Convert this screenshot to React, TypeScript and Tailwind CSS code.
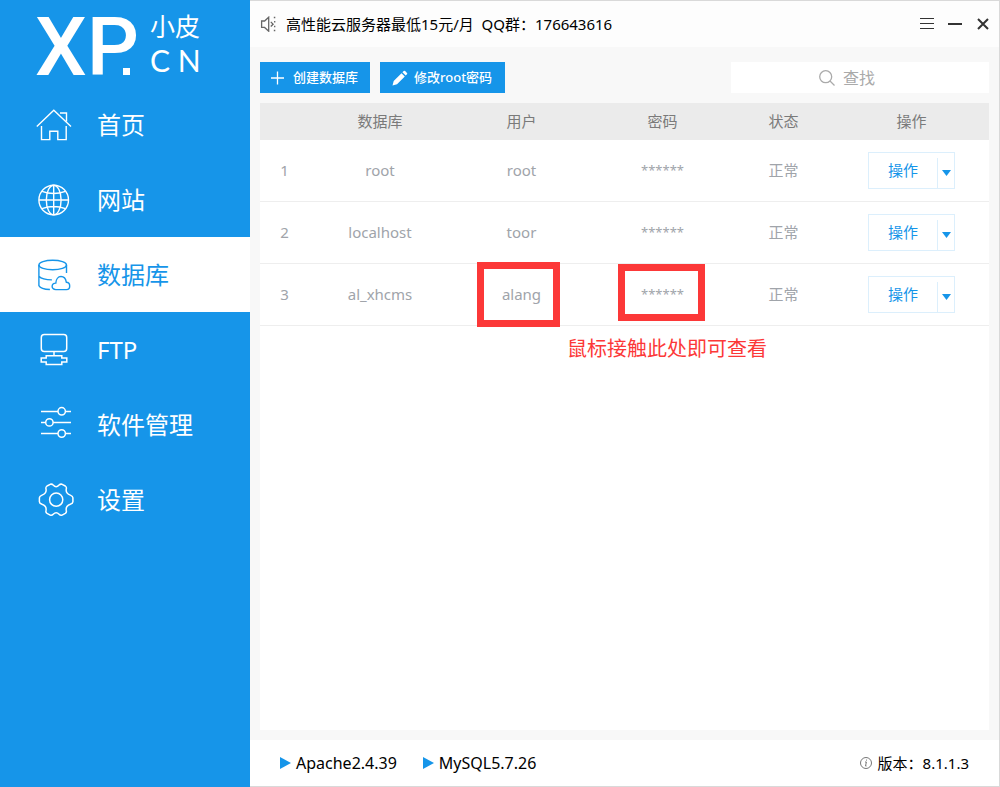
import { useState } from 'react';

interface IconProps {
  className?: string;
}

interface DatabaseRow {
  name: string;
  user: string;
  marked?: boolean;
}

const HomeIcon = ({ className }: IconProps) => (
  <svg className={className} viewBox="0 0 36 36" fill="none" stroke="currentColor" strokeWidth="1.4" aria-hidden="true">
    <path d="M.8 19.5 17.8 3.2 35 19.5" />
    <path d="M24 6h6.5v8.5" />
    <path d="M5.5 19v13.6h8.3v-8.4h8v8.4h8.4V19" />
  </svg>
);

const GlobeIcon = ({ className }: IconProps) => (
  <svg className={className} viewBox="0 0 36 36" fill="none" stroke="currentColor" strokeWidth="1.4" aria-hidden="true">
    <circle cx="17.7" cy="18" r="14.8" />
    <ellipse cx="17.7" cy="18" rx="7.4" ry="14.8" />
    <path d="M17.7 3.2v29.6M3 18h29.5M6 9.3q11.7 4.4 23.4 0M6 26.7q11.7-4.4 23.4 0" />
  </svg>
);

const DatabaseIcon = ({ className }: IconProps) => (
  <svg className={className} viewBox="0 0 36 36" fill="none" stroke="currentColor" strokeWidth="1.4" aria-hidden="true">
    <ellipse cx="16.7" cy="8" rx="13.8" ry="4.7" />
    <path d="M30.5 8v8M2.9 8v20.6c1.2 2.3 5.5 3.7 11 3.9M2.9 19.3c2 2.2 7 3.6 13 3.6" />
    <path d="M19.8 32.6c-5 0-4.8-6.6 0-6.5.2-3.8 2.4-6.6 5.2-6.6 2.7 0 4.8 2.5 5.3 5.7 4.6.2 4.4 7.4.2 7.4z" />
  </svg>
);

const FtpIcon = ({ className }: IconProps) => (
  <svg className={className} viewBox="0 0 36 36" fill="none" stroke="currentColor" strokeWidth="1.5" aria-hidden="true">
    <rect x="5.3" y="2.5" width="25.4" height="17" rx="3" />
    <path d="M18 19.5v4.2M10.2 23.7h15.6v2.2h5v4h-5v2.5H10.2v-2.5h-5v-4h5z" />
  </svg>
);

const SlidersIcon = ({ className }: IconProps) => (
  <svg className={className} viewBox="0 0 36 36" fill="none" stroke="currentColor" strokeWidth="1.5" aria-hidden="true">
    <path d="M5 4.5h17M29.4 4.5H35M5 15.5h4.7M17.1 15.5H35M5 26.5h17M29.4 26.5H35" />
    <circle cx="25.7" cy="4.3" r="3.7" />
    <circle cx="13.4" cy="15.4" r="3.7" />
    <circle cx="25.7" cy="26.5" r="3.7" />
  </svg>
);

const GearIcon = ({ className }: IconProps) => (
  <svg className={className} viewBox="0 0 36 36" fill="none" stroke="currentColor" strokeWidth="1.5" strokeLinejoin="round" aria-hidden="true">
    <circle cx="20.2" cy="17.7" r="6.6" />
    <path d="M14.2 2.3q1.8-.6 3 .8 2.9 3.2 5.9 0 1.3-1.4 3-.8l3.2 1.7q1.5 1 1 2.9-.9 4.5 4 6.2 2.6 1 2.6 2.6v4q0 1.6-2.6 2.6-4.9 1.7-4 6.2.5 1.9-1 2.9l-3.2 1.7q-1.7.6-3-.8-2.9-3.2-5.9 0-1.2 1.4-3 .8L11 31.4q-1.5-1-1-2.9.9-4.5-4-6.2-2.6-1-2.6-2.6v-4q0-1.6 2.6-2.6 4.9-1.7 4-6.2-.5-1.9 1-2.9z" />
  </svg>
);

const SpeakerIcon = ({ className }: IconProps) => (
  <svg className={className} viewBox="0 0 16 16" fill="none" stroke="currentColor" strokeWidth="1.3" aria-hidden="true">
    <path d="M1.6 5h3L8.7 1.2v14L4.6 11.4h-3zM10.8 5.9l2.3 2.3-2.3 2.3" />
    <path d="M13.8 1.5h1.5M13.8 14.5h1.5M14.7 5v1.5M14.7 9.7v1.5" />
  </svg>
);

const menu = [
  { id: 'home', label: '首页', Icon: HomeIcon },
  { id: 'site', label: '网站', Icon: GlobeIcon },
  { id: 'database', label: '数据库', Icon: DatabaseIcon },
  { id: 'ftp', label: 'FTP', Icon: FtpIcon },
  { id: 'software', label: '软件管理', Icon: SlidersIcon },
  { id: 'settings', label: '设置', Icon: GearIcon },
];

const databases: DatabaseRow[] = [
  { name: 'root', user: 'root' },
  { name: 'localhost', user: 'toor' },
  { name: 'al_xhcms', user: 'alang', marked: true },
];

const services = ['Apache2.4.39', 'MySQL5.7.26'];

const Sidebar = () => {
  const [active, setActive] = useState<string>('database');

  return (
    <aside className="w-[250px] shrink-0 bg-[#1695e9] text-white">
      <div className="flex h-[87px] items-center gap-5 pl-[35px]">
        <div className="flex items-end pt-1.5 font-['Roboto',sans-serif] text-[82px] leading-[88px] font-medium">
          XP
          <span className="mb-4 -ml-4 size-[7px] bg-white" />
        </div>
        <div className="font-['Lato','Noto_Sans_CJK_SC',sans-serif] whitespace-nowrap">
          <div className="text-[25px] leading-8">小皮</div>
          <div className="text-[30px] leading-9">C N</div>
        </div>
      </div>
      <nav>
        {menu.map(({ id, label, Icon }) => (
          <button
            key={id}
            type="button"
            onClick={() => setActive(id)}
            className={`flex h-[75px] w-full items-center gap-[25px] pl-9 text-left text-2xl ${
              active === id ? 'bg-white text-[#1695e9]' : 'text-white'
            }`}
          >
            <Icon className="size-9 overflow-visible" />
            {label}
          </button>
        ))}
      </nav>
    </aside>
  );
};

const TitleBar = () => (
  <header className="flex h-[46px] items-center bg-[#fdfdfd] pr-2 pl-2.5 text-[#333]">
    <SpeakerIcon className="size-4 text-[#666]" />
    <p className="ml-2.5 flex-1 text-[15px] whitespace-pre text-black">高性能云服务器最低15元/月  QQ群：176643616</p>
    <div className="flex items-center gap-3">
      <button type="button" aria-label="菜单">
        <svg className="size-4" viewBox="0 0 16 16" stroke="currentColor" strokeWidth="1" aria-hidden="true">
          <path d="M1 2.5h14M1 7.5h14M1 12.5h14" />
        </svg>
      </button>
      <button type="button" aria-label="最小化">
        <svg className="size-4" viewBox="0 0 16 16" stroke="currentColor" strokeWidth="2" aria-hidden="true">
          <path d="M1 8h14" />
        </svg>
      </button>
      <button type="button" aria-label="关闭">
        <svg className="size-4" viewBox="0 0 16 16" stroke="currentColor" strokeWidth="2" aria-hidden="true">
          <path d="m3 3 10 10M13 3 3 13" />
        </svg>
      </button>
    </div>
  </header>
);

const Toolbar = () => (
  <div className="flex gap-2.5">
    <button type="button" className="flex h-[31px] w-[110px] items-center gap-[7px] bg-[#1695e9] pl-2.5 text-[13px] font-medium text-white">
      <svg className="size-4" viewBox="0 0 16 16" stroke="currentColor" strokeWidth="1.3" aria-hidden="true">
        <path d="M1 8h13M7.5 1.5v13" />
      </svg>
      创建数据库
    </button>
    <button type="button" className="flex h-[31px] w-[125px] items-center gap-1.5 bg-[#1695e9] pl-3 text-[13px] font-medium text-white">
      <svg className="size-4" viewBox="0 0 16 16" fill="currentColor" aria-hidden="true">
        <path d="M.5 15.5 1.7 11 9.5 3.2l3.3 3.3L5 14.3zM10.4 2.3l1.3-1.3q.7-.6 1.4 0l1.9 1.9q.6.7 0 1.4l-1.3 1.3z" />
      </svg>
      修改root密码
    </button>
    <label className="ml-auto flex h-[31px] w-[258px] items-center gap-2 bg-white pl-[88px] text-[#aaa]">
      <svg className="size-4 shrink-0" viewBox="0 0 16 16" fill="none" stroke="currentColor" strokeWidth="1.3" aria-hidden="true">
        <circle cx="6.7" cy="6.7" r="6" />
        <path d="m11 11 4.5 4.5" />
      </svg>
      <input type="text" aria-label="查找" placeholder="查找" className="min-w-0 flex-1 text-base text-[#555] outline-none placeholder:text-[#aaa]" />
    </label>
  </div>
);

const ActionButton = () => (
  <div className="mx-auto flex h-[37px] w-[87px] border border-[#dceffc] text-[#1695e9]">
    <button type="button" className="flex-1">
      操作
    </button>
    <button type="button" aria-label="更多操作" className="mt-[5px] flex w-[17px] items-center justify-center border-l border-[#dceffc]">
      <svg className="h-[6px] w-[9px]" viewBox="0 0 9 6" fill="currentColor" aria-hidden="true">
        <path d="M0 0h9L4.5 6z" />
      </svg>
    </button>
  </div>
);

const DatabaseTable = () => (
  <table className="w-full table-fixed border-separate border-spacing-0 text-center text-[15px] text-[#a0a4aa]">
    <colgroup>
      <col className="w-[49px]" />
      <col className="w-[142px]" />
      <col className="w-[141px]" />
      <col className="w-[141px]" />
      <col className="w-[101px]" />
      <col className="w-[155px]" />
    </colgroup>
    <thead>
      <tr className="h-[37px] bg-[#ebebeb] text-[#7a7a7a]">
        <th aria-label="序号" />
        <th className="font-normal">数据库</th>
        <th className="font-normal">用户</th>
        <th className="font-normal">密码</th>
        <th className="font-normal">状态</th>
        <th className="font-normal">操作</th>
      </tr>
    </thead>
    <tbody>
      {databases.map((db, index) => (
        <tr key={db.name} className="h-[62px] *:border-b *:border-[#eee]">
          <td>{index + 1}</td>
          <td>{db.name}</td>
          <td className="relative">
            {db.user}
            {db.marked && <span className="absolute -top-0.5 left-[26px] h-[65px] w-[83px] border-7 border-[#fc3838]" />}
          </td>
          <td className="relative text-[13px]">
            ******
            {db.marked && (
              <>
                <span className="absolute top-0 left-[26px] h-[57px] w-[87px] border-7 border-[#fc3838]" />
                <span className="absolute top-[71px] -left-[25px] text-xl whitespace-nowrap text-[#fc3838]">
                  鼠标接触此处即可查看
                </span>
              </>
            )}
          </td>
          <td>正常</td>
          <td>
            <ActionButton />
          </td>
        </tr>
      ))}
    </tbody>
  </table>
);

const StatusBar = () => (
  <footer className="flex h-[46px] items-center gap-[26px] bg-white pr-[30px] pl-[30px] text-[15px] text-black">
    {services.map((service) => (
      <span key={service} className="flex items-center gap-[5px] text-base">
        <svg className="h-3 w-[11px] text-[#1695e9]" viewBox="0 0 11 12" fill="currentColor" aria-hidden="true">
          <path d="M0 0 11 6 0 12z" />
        </svg>
        {service}
      </span>
    ))}
    <span className="ml-auto flex items-center gap-1.5">
      <svg className="size-3 text-[#777]" viewBox="0 0 12 12" fill="none" stroke="currentColor" aria-hidden="true">
        <circle cx="6" cy="6" r="5.5" />
        <path d="M5 5h1.4L5.5 9h1M6.5 2.6v1" />
      </svg>
      版本：8.1.1.3
    </span>
  </footer>
);

const App: React.FC = () => {
  return (
    <div className="flex min-h-screen bg-[#f8f8f8] font-['Noto_Sans','Noto_Sans_CJK_SC',sans-serif]">
      <Sidebar />
      <div className="flex min-w-0 flex-1 flex-col border-t border-r border-b border-[#d9d9d9]">
        <TitleBar />
        <main className="flex flex-1 flex-col gap-2.5 px-2.5 pt-[15px] pb-2.5">
          <Toolbar />
          <section className="flex-1 bg-white">
            <DatabaseTable />
          </section>
        </main>
        <StatusBar />
      </div>
    </div>
  );
};

export default App;
